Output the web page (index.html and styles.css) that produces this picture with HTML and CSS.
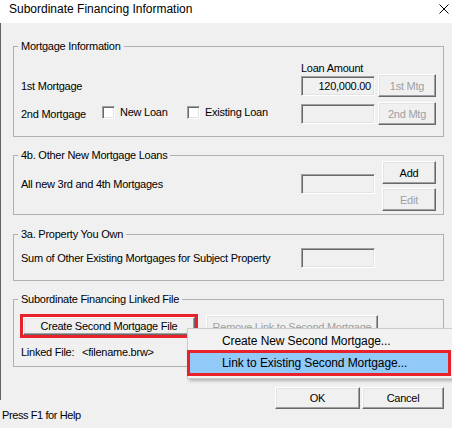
FILE: index.html
```html
<!DOCTYPE html>
<html lang="en">
<head>
  <meta charset="UTF-8" />
  <title>Subordinate Financing Information</title>
  <link rel="stylesheet" href="styles.css">
</head>
<body>
  <div class="titlebar">
    <span class="title">Subordinate Financing Information</span>
    <svg class="close" width="10" height="10" viewBox="0 0 10 10">
      <path d="M0.5 0.5L9.5 9.5M9.5 0.5L0.5 9.5" stroke="#000" stroke-width="1" fill="none" />
    </svg>
  </div>

  <div class="dialog">
    <fieldset class="group g-mortgage">
      <legend>Mortgage Information</legend>
      <div class="head">Loan Amount</div>
      <div class="row">
        <span class="label">1st Mortgage</span>
        <span class="field">120,000.00</span>
        <button class="btn mtg" disabled>1st Mtg</button>
      </div>
      <div class="row row-second">
        <span class="label short">2nd Mortgage</span>
        <label class="check"><span class="box"></span>New Loan</label>
        <label class="check"><span class="box"></span>Existing Loan</label>
        <span class="field"></span>
        <button class="btn mtg" disabled>2nd Mtg</button>
      </div>
    </fieldset>

    <fieldset class="group g-other">
      <legend>4b. Other New Mortgage Loans</legend>
      <div class="split">
        <div class="line">
          <span class="label">All new 3rd and 4th Mortgages</span>
          <span class="field"></span>
        </div>
        <div class="stack">
          <button class="btn">Add</button>
          <button class="btn" disabled>Edit</button>
        </div>
      </div>
    </fieldset>

    <fieldset class="group g-property">
      <legend>3a. Property You Own</legend>
      <div class="line">
        <span class="label">Sum of Other Existing Mortgages for Subject Property</span>
        <span class="field"></span>
      </div>
    </fieldset>

    <fieldset class="group g-linked">
      <legend>Subordinate Financing Linked File</legend>
      <div class="link-row">
        <div class="callout">
          <button class="btn create">Create Second Mortgage File</button>
        </div>
        <button class="btn remove" disabled>Remove Link to Second Mortgage</button>
      </div>
      <div class="linked">Linked File: <span class="filename">&lt;filename.brw&gt;</span></div>
    </fieldset>

    <div class="actions">
      <button class="btn ok">OK</button>
      <button class="btn cancel">Cancel</button>
    </div>
  </div>

  <div class="status">Press F1 for Help</div>

  <div class="menu">
    <div class="menu-item">Create New Second Mortgage...</div>
    <div class="menu-item active">Link to Existing Second Mortgage...</div>
  </div>
</body>
</html>
```

FILE: styles.css
```css
* {
  box-sizing: border-box;
}

html, body {
  margin: 0;
  padding: 0;
}

body {
  position: relative;
  width: 452px;
  height: 428px;
  overflow: hidden;
  background: #f0f0f0;
  font-family: "Liberation Sans", Arial, sans-serif;
  font-size: 11px;
  letter-spacing: -0.25px;
  color: #000;
}

/* edge of the window behind the dialog */
body::before {
  content: "";
  position: absolute;
  left: 0;
  top: 23px;
  width: 1px;
  height: 377px;
  background: #646464;
}

.titlebar {
  height: 23px;
  background: #fff;
  display: flex;
  align-items: center;
  justify-content: space-between;
  padding: 0 3px 5px 9px;
  font-size: 12px;
  letter-spacing: 0;
}

.dialog {
  padding: 17px 0 0 13px;
}

.group {
  margin: 0;
  width: 431px;
  border: 1px solid #b0b0b0;
  padding: 0 7px;
}

.group legend {
  padding: 0 3px;
  margin-left: -3px;
  height: 12px;
  line-height: 12px;
}

.label {
  line-height: 12px;
  white-space: nowrap;
}

.label.short {
  width: 81px;
}

.field {
  margin-left: auto;
  width: 74px;
  height: 20px;
  border: 1px solid;
  border-color: #a0a0a0 #fff #fff #a0a0a0;
  box-shadow: inset 1px 1px #696969, inset -1px -1px #e3e3e3;
  background: #f0f0f0;
  text-align: right;
  padding-right: 3px;
  line-height: 18px;
}

.btn {
  font: inherit;
  letter-spacing: inherit;
  color: #000;
  background: #f0f0f0;
  border: 1px solid;
  border-color: #fff #696969 #696969 #fff;
  box-shadow: inset -1px -1px #a0a0a0, inset 1px 1px #e3e3e3;
  padding: 0;
  white-space: nowrap;
}

.btn:disabled {
  color: #a0a0a0;
}

/* Mortgage Information */
.g-mortgage {
  padding-top: 10px;
  padding-bottom: 11px;
}

.head {
  height: 12px;
  line-height: 12px;
  padding-left: 280px;
}

.row {
  display: flex;
  align-items: center;
  height: 23px;
}

.row-second {
  margin-top: 5px;
}

.btn.mtg {
  width: 58px;
  height: 23px;
  margin-left: 3px;
}

.check {
  display: flex;
  align-items: center;
  gap: 5px;
  width: 85px;
  margin-bottom: 3px;
  white-space: nowrap;
}

.box {
  width: 13px;
  height: 13px;
  border: 1px solid;
  border-color: #a0a0a0 #fff #fff #a0a0a0;
  box-shadow: inset 1px 1px #696969, inset -1px -1px #e3e3e3;
  background: #fff;
}

/* 4b. Other New Mortgage Loans */
.g-other {
  margin-top: 12px;
  padding-bottom: 3px;
}

.split {
  display: flex;
  align-items: flex-start;
}

.line {
  display: flex;
  align-items: center;
  height: 20px;
}

.split .line {
  flex: 1;
  margin-top: 13px;
}

.stack {
  display: flex;
  flex-direction: column;
  gap: 4px;
  width: 54px;
  margin-left: 7px;
}

.stack .btn {
  height: 23px;
}

/* 3a. Property You Own */
.g-property {
  margin-top: 13px;
  padding-top: 8px;
  padding-bottom: 12px;
}

.g-property .field {
  margin-right: 61px;
}

/* Subordinate Financing Linked File */
.g-linked {
  margin-top: 12px;
  padding-top: 9px;
  padding-bottom: 8px;
}

.link-row {
  display: flex;
  align-items: flex-start;
}

.callout {
  margin-left: -1px;
  width: 178px;
  height: 24px;
  border: 3px solid #e8212b;
}

.btn.create {
  width: 100%;
  height: 100%;
}

.btn.remove {
  width: 172px;
  height: 23px;
  margin-left: 8px;
  margin-top: 1px;
}

.linked {
  margin-top: 8px;
  line-height: 12px;
}

.filename {
  margin-left: 5px;
}

.actions {
  display: flex;
  justify-content: flex-end;
  gap: 2px;
  margin-top: 20px;
  padding-right: 8px;
}

.actions .btn {
  height: 22px;
}

.btn.ok {
  width: 85px;
}

.btn.cancel {
  width: 82px;
}

.status {
  padding-left: 2px;
  margin-top: -1px;
  font-size: 11px;
  letter-spacing: -0.4px;
  line-height: 14px;
}

/* popup menu of the Create button */
.menu {
  position: absolute;
  left: 187px;
  top: 328px;
  width: 280px;
  background: #f2f2f2;
  border: 1px solid #cccccc;
  box-shadow: 2px 2px 3px rgba(0, 0, 0, 0.25);
  padding: 3px 0 2px;
  font-size: 12px;
  letter-spacing: -0.1px;
}

.menu-item {
  height: 18px;
  line-height: 18px;
  padding-left: 34px;
  white-space: nowrap;
}

.menu-item.active {
  margin-left: -1px;
  width: 264px;
  height: 26px;
  line-height: 20px;
  padding-left: 32px;
  border: 3px solid #e8212b;
  background: #91c9f7;
}
```
